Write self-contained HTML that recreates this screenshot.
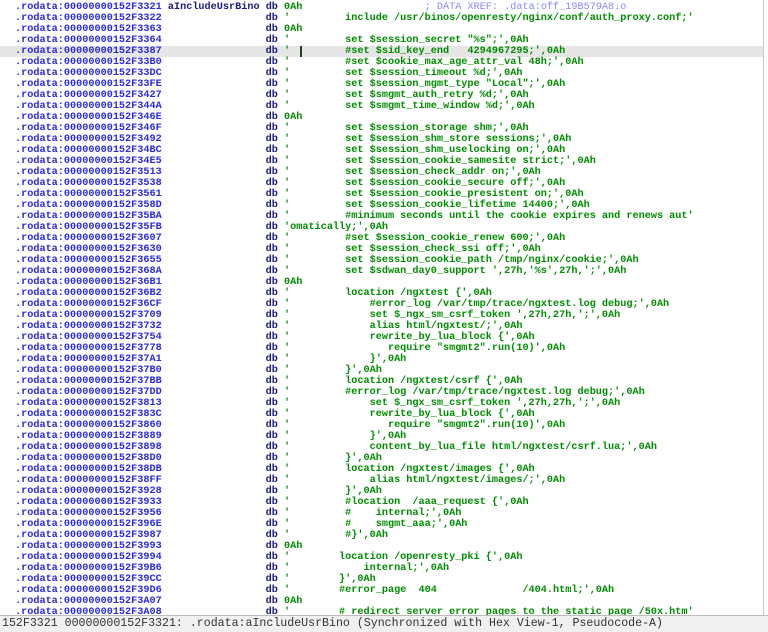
<!DOCTYPE html>
<html><head><meta charset="utf-8"><style>
html,body{margin:0;padding:0;background:#fff;width:768px;height:632px;overflow:hidden}
#main{position:absolute;left:0;top:0;width:763px;height:615px;border-right:1px solid #c8c8c8;overflow:hidden}
pre{margin:0;position:absolute;left:15px;top:2px;font-family:"Liberation Mono",monospace;font-size:10.2px;line-height:11px;font-weight:bold;color:#008c00;white-space:pre}
.a{color:#2a2ad8}.d{color:#1a1a80}.c{color:#8888f0;font-weight:normal}.n{color:#1a1a80}
.hl{position:absolute;left:0;top:46px;width:763px;height:11px;background:#e6e6e6}
.cur{position:absolute;left:300px;top:46px;width:2px;height:11px;background:#204020}
#st{position:absolute;left:0;top:615px;width:768px;height:17px;background:#f0f0f0;border-top:1px solid #bdbdbd;font-family:"Liberation Mono",monospace;font-size:11.6px;line-height:16px;color:#333;padding-left:2px;white-space:pre;box-sizing:border-box}
</style></head><body>
<div id="main">
<div class="hl"></div><div class="cur"></div>
<pre><span class="a">.rodata:00000000152F3321</span> <span class="n">aIncludeUsrBino</span> <span class="d">db</span> 0Ah                    <span class="c">; DATA XREF: .data:off_19B579A8↓o</span>
<span class="a">.rodata:00000000152F3322</span>                 <span class="d">db</span> '         include /usr/binos/openresty/nginx/conf/auth_proxy.conf;'
<span class="a">.rodata:00000000152F3363</span>                 <span class="d">db</span> 0Ah
<span class="a">.rodata:00000000152F3364</span>                 <span class="d">db</span> '         set $session_secret "%s";',0Ah
<span class="a">.rodata:00000000152F3387</span>                 <span class="d">db</span> '         #set $sid_key_end   4294967295;',0Ah
<span class="a">.rodata:00000000152F33B0</span>                 <span class="d">db</span> '         #set $cookie_max_age_attr_val 48h;',0Ah
<span class="a">.rodata:00000000152F33DC</span>                 <span class="d">db</span> '         set $session_timeout %d;',0Ah
<span class="a">.rodata:00000000152F33FE</span>                 <span class="d">db</span> '         set $session_mgmt_type "Local";',0Ah
<span class="a">.rodata:00000000152F3427</span>                 <span class="d">db</span> '         set $smgmt_auth_retry %d;',0Ah
<span class="a">.rodata:00000000152F344A</span>                 <span class="d">db</span> '         set $smgmt_time_window %d;',0Ah
<span class="a">.rodata:00000000152F346E</span>                 <span class="d">db</span> 0Ah
<span class="a">.rodata:00000000152F346F</span>                 <span class="d">db</span> '         set $session_storage shm;',0Ah
<span class="a">.rodata:00000000152F3492</span>                 <span class="d">db</span> '         set $session_shm_store sessions;',0Ah
<span class="a">.rodata:00000000152F34BC</span>                 <span class="d">db</span> '         set $session_shm_uselocking on;',0Ah
<span class="a">.rodata:00000000152F34E5</span>                 <span class="d">db</span> '         set $session_cookie_samesite strict;',0Ah
<span class="a">.rodata:00000000152F3513</span>                 <span class="d">db</span> '         set $session_check_addr on;',0Ah
<span class="a">.rodata:00000000152F3538</span>                 <span class="d">db</span> '         set $session_cookie_secure off;',0Ah
<span class="a">.rodata:00000000152F3561</span>                 <span class="d">db</span> '         set $session_cookie_presistent on;',0Ah
<span class="a">.rodata:00000000152F358D</span>                 <span class="d">db</span> '         set $session_cookie_lifetime 14400;',0Ah
<span class="a">.rodata:00000000152F35BA</span>                 <span class="d">db</span> '         #minimum seconds until the cookie expires and renews aut'
<span class="a">.rodata:00000000152F35FB</span>                 <span class="d">db</span> 'omatically;',0Ah
<span class="a">.rodata:00000000152F3607</span>                 <span class="d">db</span> '         #set $session_cookie_renew 600;',0Ah
<span class="a">.rodata:00000000152F3630</span>                 <span class="d">db</span> '         set $session_check_ssi off;',0Ah
<span class="a">.rodata:00000000152F3655</span>                 <span class="d">db</span> '         set $session_cookie_path /tmp/nginx/cookie;',0Ah
<span class="a">.rodata:00000000152F368A</span>                 <span class="d">db</span> '         set $sdwan_day0_support ',27h,'%s',27h,';',0Ah
<span class="a">.rodata:00000000152F36B1</span>                 <span class="d">db</span> 0Ah
<span class="a">.rodata:00000000152F36B2</span>                 <span class="d">db</span> '         location /ngxtest {',0Ah
<span class="a">.rodata:00000000152F36CF</span>                 <span class="d">db</span> '             #error_log /var/tmp/trace/ngxtest.log debug;',0Ah
<span class="a">.rodata:00000000152F3709</span>                 <span class="d">db</span> '             set $_ngx_sm_csrf_token ',27h,27h,';',0Ah
<span class="a">.rodata:00000000152F3732</span>                 <span class="d">db</span> '             alias html/ngxtest/;',0Ah
<span class="a">.rodata:00000000152F3754</span>                 <span class="d">db</span> '             rewrite_by_lua_block {',0Ah
<span class="a">.rodata:00000000152F3778</span>                 <span class="d">db</span> '                require "smgmt2".run(10)',0Ah
<span class="a">.rodata:00000000152F37A1</span>                 <span class="d">db</span> '             }',0Ah
<span class="a">.rodata:00000000152F37B0</span>                 <span class="d">db</span> '         }',0Ah
<span class="a">.rodata:00000000152F37BB</span>                 <span class="d">db</span> '         location /ngxtest/csrf {',0Ah
<span class="a">.rodata:00000000152F37DD</span>                 <span class="d">db</span> '         #error_log /var/tmp/trace/ngxtest.log debug;',0Ah
<span class="a">.rodata:00000000152F3813</span>                 <span class="d">db</span> '             set $_ngx_sm_csrf_token ',27h,27h,';',0Ah
<span class="a">.rodata:00000000152F383C</span>                 <span class="d">db</span> '             rewrite_by_lua_block {',0Ah
<span class="a">.rodata:00000000152F3860</span>                 <span class="d">db</span> '                require "smgmt2".run(10)',0Ah
<span class="a">.rodata:00000000152F3889</span>                 <span class="d">db</span> '             }',0Ah
<span class="a">.rodata:00000000152F3898</span>                 <span class="d">db</span> '             content_by_lua_file html/ngxtest/csrf.lua;',0Ah
<span class="a">.rodata:00000000152F38D0</span>                 <span class="d">db</span> '         }',0Ah
<span class="a">.rodata:00000000152F38DB</span>                 <span class="d">db</span> '         location /ngxtest/images {',0Ah
<span class="a">.rodata:00000000152F38FF</span>                 <span class="d">db</span> '             alias html/ngxtest/images/;',0Ah
<span class="a">.rodata:00000000152F3928</span>                 <span class="d">db</span> '         }',0Ah
<span class="a">.rodata:00000000152F3933</span>                 <span class="d">db</span> '         #location  /aaa_request {',0Ah
<span class="a">.rodata:00000000152F3956</span>                 <span class="d">db</span> '         #    internal;',0Ah
<span class="a">.rodata:00000000152F396E</span>                 <span class="d">db</span> '         #    smgmt_aaa;',0Ah
<span class="a">.rodata:00000000152F3987</span>                 <span class="d">db</span> '         #}',0Ah
<span class="a">.rodata:00000000152F3993</span>                 <span class="d">db</span> 0Ah
<span class="a">.rodata:00000000152F3994</span>                 <span class="d">db</span> '        location /openresty_pki {',0Ah
<span class="a">.rodata:00000000152F39B6</span>                 <span class="d">db</span> '            internal;',0Ah
<span class="a">.rodata:00000000152F39CC</span>                 <span class="d">db</span> '        }',0Ah
<span class="a">.rodata:00000000152F39D6</span>                 <span class="d">db</span> '        #error_page  404              /404.html;',0Ah
<span class="a">.rodata:00000000152F3A07</span>                 <span class="d">db</span> 0Ah
<span class="a">.rodata:00000000152F3A08</span>                 <span class="d">db</span> '        # redirect server error pages to the static page /50x.htm'</pre>
</div>
<div id="st">152F3321 00000000152F3321: .rodata:aIncludeUsrBino (Synchronized with Hex View-1, Pseudocode-A)</div>
</body></html>
